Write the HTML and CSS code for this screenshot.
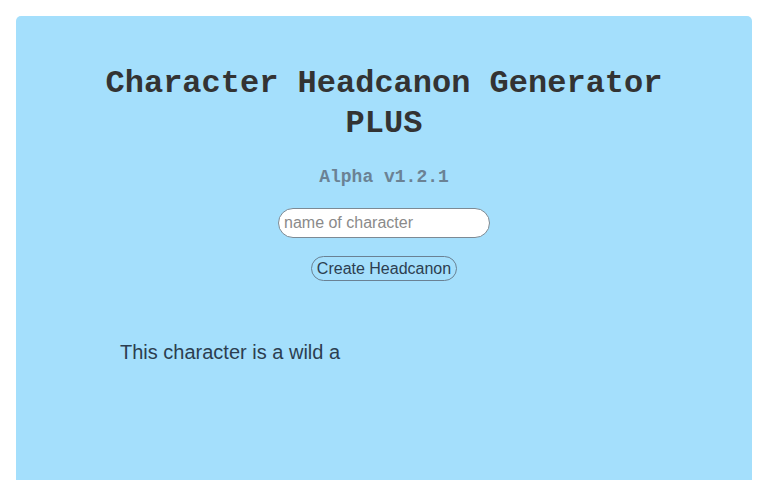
FILE: index.html
```html
<!DOCTYPE html>
<html>
<head>
<meta charset="utf-8">
<link rel="stylesheet" href="styles.css">
</head>
<body>
<main class="card">
  <h1 class="title">Character Headcanon Generator PLUS</h1>
  <h2 class="version">Alpha v1.2.1</h2>
  <input class="name-input" type="text" placeholder="name of character">
  <button class="create-btn">Create Headcanon</button>
  <p class="result">This character is a wild a</p>
</main>
</body>
</html>
```

FILE: styles.css
```css
html, body {
  margin: 0;
  padding: 0;
  background: #ffffff;
}
body {
  padding: 16px 16px 0;
  height: 480px;
  box-sizing: border-box;
  overflow: hidden;
}
.card {
  background: #a4dffc;
  border-radius: 5px;
  height: 464px;
  display: flex;
  flex-direction: column;
  align-items: center;
  padding-top: 48px;
  box-sizing: border-box;
  border-bottom-left-radius: 0;
  border-bottom-right-radius: 0;
}
.title {
  margin: 0;
  font-family: "Courier New", "Nimbus Mono PS", "FreeMono", "Liberation Mono", monospace;
  font-weight: bold;
  font-size: 32px;
  line-height: 40px;
  color: #333333;
  text-align: center;
  width: 600px;
}
.version {
  margin: 22px 0 0;
  font-family: "Courier New", "Nimbus Mono PS", "FreeMono", "Liberation Mono", monospace;
  font-weight: bold;
  font-size: 18px;
  line-height: 22px;
  color: #6b8294;
}
.name-input {
  margin-top: 20px;
  width: 212px;
  height: 30px;
  box-sizing: border-box;
  border: 1px solid #7d8a94;
  border-radius: 15px;
  background: #ffffff;
  font-family: "Liberation Sans", sans-serif;
  font-size: 16px;
  padding: 0 5px;
  color: #333;
  outline: none;
}
.name-input::placeholder {
  color: #8a8a8a;
}
.create-btn {
  margin-top: 18px;
  width: 146px;
  height: 25px;
  box-sizing: border-box;
  border: 1px solid #6a8193;
  border-radius: 13px;
  background: transparent;
  font-family: "Liberation Sans", sans-serif;
  font-size: 16px;
  color: #2c3e50;
  padding: 0;
}
.result {
  align-self: stretch;
  margin: 59px 0 0;
  padding-left: 104px;
  font-family: "Liberation Sans", sans-serif;
  font-size: 20px;
  line-height: 24px;
  color: #2c3e50;
}
```
